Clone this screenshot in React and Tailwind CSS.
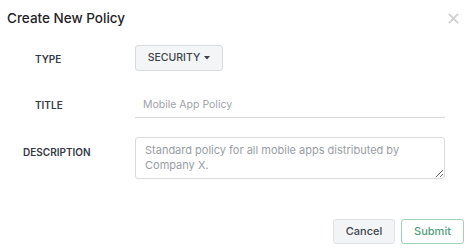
import React from 'react';

const App = () => {
  return (
    <div className="w-[474px] h-[249px] bg-white overflow-hidden" style={{ fontFamily: 'Inter, "Noto Sans", sans-serif' }}>
      {/* header */}
      <div className="flex items-center justify-between h-[37px] pl-[7px] pr-[15px]">
        <h2 className="text-[13.5px] font-medium text-[#1f2328]">Create New Policy</h2>
        <button className="text-[#cfcfcf]">
          <svg width="11" height="11" viewBox="0 0 12 12" fill="none" stroke="currentColor" strokeWidth="2" strokeLinecap="round">
            <path d="M1.5 1.5l9 9M10.5 1.5l-9 9" />
          </svg>
        </button>
      </div>

      {/* form */}
      <div className="flex flex-col">
        <div className="flex items-center h-[26px] mt-[8px]">
          <label className="w-[135px] pl-[35px] pt-[3px] text-[10px] font-semibold text-[#343a46]">TYPE</label>
          <button className="h-[26px] w-[88px] flex items-center justify-center gap-[4px] rounded-[3px] border border-[#d9dadc] bg-[#f4f5f6] text-[10.5px] font-medium text-[#3c4048]">
            SECURITY
            <svg width="6" height="4" viewBox="0 0 6 4"><path d="M0 0h6L3 3.5z" fill="currentColor" /></svg>
          </button>
        </div>

        <div className="flex items-center h-[30px] mt-[17px]">
          <label className="w-[135px] pl-[35px] pt-[5px] text-[10px] font-semibold text-[#343a46]">TITLE</label>
          <input
            className="w-[310px] h-[30px] border-b border-[#d5d7da] px-[8px] pt-[4px] text-[10.5px] text-[#555] placeholder:text-[#a0a3a8] outline-none"
            placeholder="Mobile App Policy"
          />
        </div>

        <div className="flex items-start h-[42px] mt-[19px]">
          <label className="w-[135px] pl-[23px] pt-[9px] leading-[12px] text-[10px] font-semibold text-[#343a46]">DESCRIPTION</label>
          <textarea
            className="w-[310px] h-[42px] rounded-[3px] border border-[#d9dadc] px-[9px] py-[5px] text-[11px] leading-[15px] text-[#999da3] outline-none"
            defaultValue="Standard policy for all mobile apps distributed by Company X."
          />
        </div>

        {/* footer */}
        <div className="flex justify-end gap-[6px] pr-[10px] mt-[40px]">
          <button className="h-[25px] w-[62px] rounded-[3px] border border-[#e0e1e3] bg-[#f3f4f5] text-[11px] font-medium text-[#40444c]">
            Cancel
          </button>
          <button className="h-[25px] w-[63px] rounded-[3px] border border-[#9cd3b8] bg-white text-[11px] font-medium text-[#4f9e7c]">
            Submit
          </button>
        </div>
      </div>
    </div>
  );
};

export default App;
